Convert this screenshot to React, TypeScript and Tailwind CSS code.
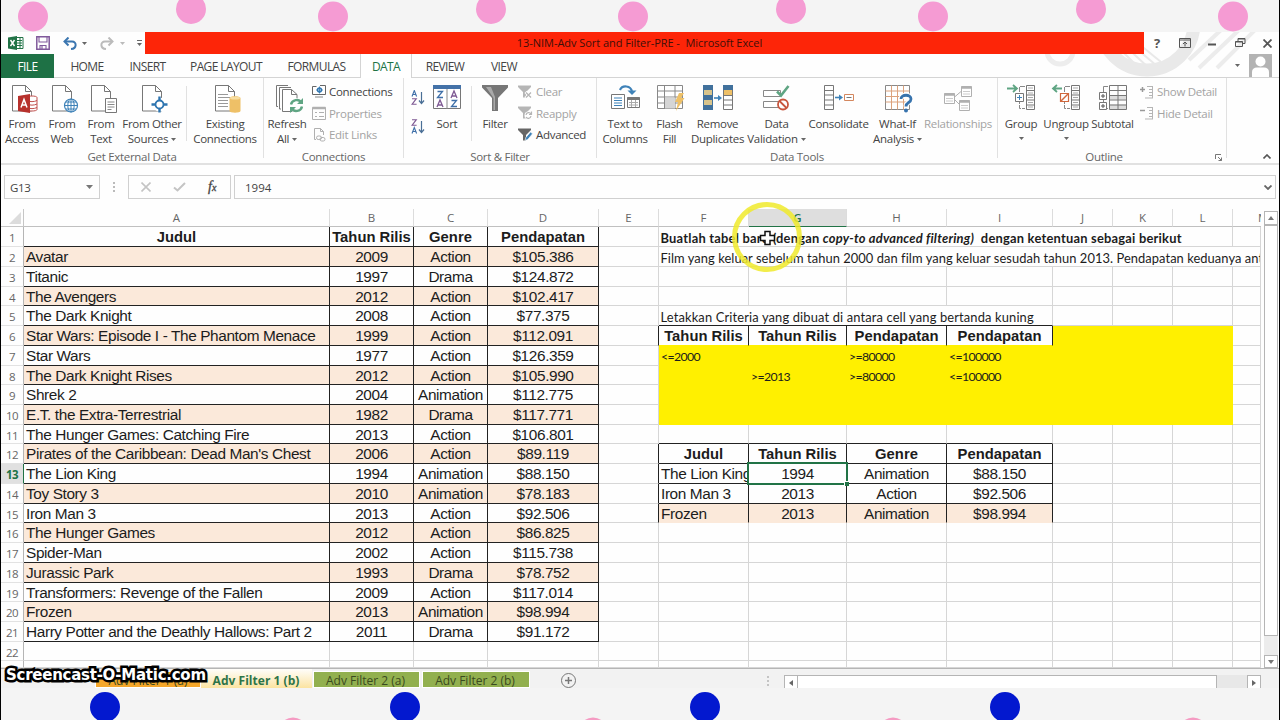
import React from "react";
import clsx from "clsx";

type CellStyle = "th" | "left" | "center" | "note" | "crit";

interface Cell {
  text?: React.ReactNode;
  kind?: CellStyle;
  fill?: string;
  right?: string;
  bottom?: string;
  span?: number;
  selected?: boolean;
}

const MOVIES = [
  ["Avatar", "2009", "Action", "$105.386"],
  ["Titanic", "1997", "Drama", "$124.872"],
  ["The Avengers", "2012", "Action", "$102.417"],
  ["The Dark Knight", "2008", "Action", "$77.375"],
  ["Star Wars: Episode I - The Phantom Menace", "1999", "Action", "$112.091"],
  ["Star Wars", "1977", "Action", "$126.359"],
  ["The Dark Knight Rises", "2012", "Action", "$105.990"],
  ["Shrek 2", "2004", "Animation", "$112.775"],
  ["E.T. the Extra-Terrestrial", "1982", "Drama", "$117.771"],
  ["The Hunger Games: Catching Fire", "2013", "Action", "$106.801"],
  ["Pirates of the Caribbean: Dead Man's Chest", "2006", "Action", "$89.119"],
  ["The Lion King", "1994", "Animation", "$88.150"],
  ["Toy Story 3", "2010", "Animation", "$78.183"],
  ["Iron Man 3", "2013", "Action", "$92.506"],
  ["The Hunger Games", "2012", "Action", "$86.825"],
  ["Spider-Man", "2002", "Action", "$115.738"],
  ["Jurassic Park", "1993", "Drama", "$78.752"],
  ["Transformers: Revenge of the Fallen", "2009", "Action", "$117.014"],
  ["Frozen", "2013", "Animation", "$98.994"],
  ["Harry Potter and the Deathly Hallows: Part 2", "2011", "Drama", "$91.172"],
];

const RESULTS: Record<number, string[]> = {
  12: ["Judul", "Tahun Rilis", "Genre", "Pendapatan"],
  13: ["The Lion King", "1994", "Animation", "$88.150"],
  14: ["Iron Man 3", "2013", "Action", "$92.506"],
  15: ["Frozen", "2013", "Animation", "$98.994"],
};

const CRITERIA: Record<number, string[]> = {
  6: ["Tahun Rilis", "Tahun Rilis", "Pendapatan", "Pendapatan"],
  7: ["<=2000", "", ">=80000", "<=100000"],
  8: ["", ">=2013", ">=80000", "<=100000"],
  9: ["", "", "", ""],
  10: ["", "", "", ""],
};

const COLUMNS = ["A", "B", "C", "D", "E", "F", "G", "H", "I", "J", "K", "L", "M"];
const GRID = "grid grid-cols-[23px_306px_84px_74px_111px_60px_90px_98px_100px_106px_60px_60px_60px_28px]";

const DARK = "border-r-[#222]";
const DARK_B = "border-b-[#222]";
const PEACH = "bg-[#fbe9da]";
const YELLOW = "bg-[#fff000]";

// rows are 19.73px tall on average, so lines are rounded one by one
const lineAt = (row: number) => Math.round(227.4 + 19.73 * row);
const rowHeight = (row: number) => (row > 22 ? 668 - lineAt(22) : lineAt(row) - lineAt(row - 1));

function cellsFor(row: number): Cell[] {
  const cells: Cell[] = [];
  if (row === 1) {
    ["Judul", "Tahun Rilis", "Genre", "Pendapatan"].forEach((text) =>
      cells.push({ text, kind: "th", right: DARK, bottom: DARK_B })
    );
  } else if (row <= 21) {
    MOVIES[row - 2].forEach((text, i) =>
      cells.push({
        text,
        kind: i === 0 ? "left" : "center",
        fill: row % 2 === 0 ? PEACH : undefined,
        right: DARK,
        bottom: DARK_B,
      })
    );
  } else {
    cells.push({}, {}, {}, {});
  }

  // column E carries the left edge of the tables beside it
  cells.push({ right: row === 6 || RESULTS[row] ? DARK : undefined });

  if (row === 1) {
    cells.push({
      kind: "note",
      span: 7,
      text: (
        <span className="font-bold text-[12.9px] tracking-[0.22px]">
          Buatlah tabel baru (dengan <i>copy-to advanced filtering)</i>&nbsp; dengan ketentuan sebagai berikut
        </span>
      ),
    });
    cells.push({});
  } else if (row === 2) {
    cells.push({
      kind: "note",
      span: 8,
      text: "Film yang keluar sebelum tahun 2000 dan film yang keluar sesudah tahun 2013. Pendapatan keduanya antara",
    });
  } else if (row === 5) {
    cells.push({
      kind: "note",
      span: 4,
      bottom: DARK_B,
      text: (
        <span className="tracking-[0.14px]">
          Letakkan Criteria yang dibuat di antara cell yang bertanda kuning
        </span>
      ),
    });
    cells.push({}, {}, {}, {});
  } else if (CRITERIA[row]) {
    CRITERIA[row].forEach((text) =>
      cells.push(
        row === 6
          ? { text, kind: "th", right: DARK, bottom: "border-b-[#fff000]" }
          : { text, kind: "crit", fill: YELLOW, right: "border-r-[#fff000]", bottom: "border-b-[#fff000]" }
      )
    );
    for (let i = 0; i < 3; i++) {
      cells.push({ fill: YELLOW, right: "border-r-[#fff000]", bottom: "border-b-[#fff000]" });
    }
    cells.push({});
  } else if (RESULTS[row]) {
    RESULTS[row].forEach((text, i) =>
      cells.push({
        text,
        kind: row === 12 ? "th" : i === 0 ? "left" : "center",
        fill: row === 15 ? PEACH : undefined,
        right: DARK,
        bottom: row === 15 ? "border-b-[#fbe9da]" : DARK_B,
        selected: row === 13 && i === 1,
      })
    );
    cells.push({}, {}, {}, {});
  } else {
    for (let i = 0; i < 8; i++) {
      cells.push({ bottom: row === 11 && i < 4 ? DARK_B : undefined });
    }
  }
  return cells;
}

const KINDS: Record<CellStyle, string> = {
  th: "justify-center pt-px font-bold text-[14.8px] font-['Liberation_Sans',sans-serif]",
  left: "pl-[2px] pt-px text-[15.4px] tracking-[-0.39px] font-['Liberation_Sans',sans-serif]",
  center: "justify-center pt-px text-[15.4px] tracking-[-0.39px] font-['Liberation_Sans',sans-serif]",
  note: "pl-[1.5px] pt-[4px] text-[12.9px] tracking-[0.06px] font-['Lato',sans-serif]",
  crit: "pl-[2px] pt-[4px] text-[12.3px] tracking-[-0.65px] font-['Lato',sans-serif]",
};

const SPANS: Record<number, string> = { 4: "col-span-4", 7: "col-span-7", 8: "col-span-8" };

function GridCell({ cell }: { cell: Cell }) {
  return (
    <div
      className={clsx(
        "min-w-0 flex items-center border-r border-b whitespace-nowrap text-[#1c1c1c] leading-none",
        cell.right ?? "border-r-[#d6d6d6]",
        cell.bottom ?? "border-b-[#d6d6d6]",
        cell.fill,
        cell.kind && KINDS[cell.kind],
        cell.span && SPANS[cell.span],
        cell.selected ? "relative" : "overflow-hidden"
      )}
    >
      {cell.text}
      {cell.selected && (
        <>
          <div className="absolute -inset-[2px] border-2 border-[#217346] z-10" />
          <div className="absolute -right-[3px] -bottom-[3px] size-[5px] bg-[#217346] border-l border-t border-white z-20" />
        </>
      )}
    </div>
  );
}

function Caret({ className = "text-[#666]" }: { className?: string }) {
  return (
    <svg width="5" height="3" viewBox="0 0 5 3" className={clsx("inline-block", className)}>
      <path d="M0 0h5L2.5 3z" fill="currentColor" />
    </svg>
  );
}

/* ---------- ribbon icons ---------- */

function Doc({ children }: { children?: React.ReactNode }) {
  return (
    <svg width="30" height="30" viewBox="0 0 30 30" fill="none" className="ml-[4px]">
      <path d="M3.5 1.5h13l6 6v19.500h-19z" fill="#fff" stroke="#777" />
      <path d="M16.500 1.500v6h6" stroke="#777" />
      {children}
    </svg>
  );
}

const AccessIcon = () => (
  <Doc>
    <path d="M18 13.500c0-2 10-2 10 0v12c0 2-10 2-10 0z" fill="#fff" stroke="#c0504d" />
    <path d="M18 16.500c3 1.500 7 1.500 10 0M18 20c3 1.500 7 1.500 10 0M18 23.500c3 1.500 7 1.500 10 0" stroke="#c0504d" />
    <path d="M9 12l12-2v19L9 27z" fill="#b7312c" />
    <path d="M12 23.500l3-8 3 8M13 21h4" stroke="#fff" strokeWidth="1.500" />
  </Doc>
);

const WebIcon = () => (
  <Doc>
    <circle cx="22" cy="21.500" r="6.500" fill="#fff" stroke="#3e82b8" strokeWidth="1.200" />
    <path d="M15.500 21.500h13M22 15v13M17 18h10M17 25h10" stroke="#3e82b8" />
    <ellipse cx="22" cy="21.500" rx="3.200" ry="6.500" stroke="#3e82b8" />
  </Doc>
);

const TextIcon = () => (
  <Doc>
    <path d="M17.500 14.500h11v14h-11z" fill="#fff" stroke="#777" />
    <path d="M19.500 18h7M19.500 20.500h7M19.500 23h7M19.500 25.500h4" stroke="#888" />
  </Doc>
);

const OtherIcon = () => (
  <Doc>
    <circle cx="20.500" cy="20.500" r="7" fill="#fff" />
    <circle cx="20.500" cy="20.500" r="4" fill="#fff" stroke="#2e75b0" strokeWidth="1.800" />
    <path d="M20.500 12.500v4M20.500 24.500v4M12.500 20.500h4M24.500 20.500h4" stroke="#2e75b0" strokeWidth="2.400" />
  </Doc>
);

const ExistingIcon = () => (
  <Doc>
    <path d="M6 10.500h10M6 13.500h13M6 16.500h10M6 19.500h10M6 22.500h10" stroke="#999" />
    <path d="M17.500 14c0-2.500 11-2.500 11 0v13c0 2.300-11 2.300-11 0z" fill="#eec067" />
    <ellipse cx="23" cy="14" rx="5" ry="1.500" fill="#f8deA0" />
  </Doc>
);

const RefreshIcon = () => (
  <svg width="30" height="30" viewBox="0 0 30 30" fill="none" className="ml-[3px]">
    <path d="M4 22.500H2.500V1.500H14M7 25H5.500V3.500H17" stroke="#777" />
    <path d="M8.500 5.500h9l5.500 5v17H8.500z" fill="#fff" stroke="#777" />
    <path d="M17.500 5.500v5H23" stroke="#777" />
    <circle cx="22.500" cy="21.500" r="7.500" fill="#fff" />
    <path d="M17 20.500c1-5 8-6 10-2M28 22.500c-1 5-8 6-10 2" stroke="#5fa583" strokeWidth="2.400" />
    <path d="M29 14v6h-6zM16 29v-6h6z" fill="#5fa583" />
  </svg>
);

const SortIcon = () => (
  <svg width="28" height="30" viewBox="0 0 28 30" fill="none">
    <path d="M.5 2.500h27v22H.5z" fill="#fff" stroke="#777" />
    <path d="M0 1h28v4H0z" fill="#4472a8" />
    <path d="M14 5v20" stroke="#888" />
    <path d="M4.500 7.500h5l-5 6h5.500" stroke="#3e6fa8" strokeWidth="1.300" />
    <path d="M4 23l3-7 3 7M5 21h4" stroke="#7f5a94" strokeWidth="1.300" />
    <path d="M18 14l3-7 3 7M19 12h4" stroke="#7f5a94" strokeWidth="1.300" />
    <path d="M18.500 16.500h5l-5 6H24" stroke="#3e6fa8" strokeWidth="1.300" />
  </svg>
);

function SmallSort({ desc = false }: { desc?: boolean }) {
  const a = <path d="M1 6.500l2.300-6 2.300 6M1.800 4.500h3" />;
  const z = <path d="M1 .7h4.300L1 6.300h4.600" />;
  return (
    <svg width="14" height="16" viewBox="0 0 14 16" fill="none" strokeWidth="1.100">
      <g stroke={desc ? "#7f5a94" : "#3e6fa8"}>{desc ? z : a}</g>
      <g stroke={desc ? "#3e6fa8" : "#7f5a94"} transform="translate(0 8)">
        {desc ? a : z}
      </g>
      <path d="M10.500 2v11M8 10.500l2.500 3 2.500-3" stroke="#4a6f96" strokeWidth="1.200" />
    </svg>
  );
}

const FilterIcon = () => (
  <svg width="28" height="30" viewBox="0 0 28 30">
    <path d="M1 1h26v2.500L17 14v13h-6V14L1 3.500z" fill="#777" />
    <path d="M5 3h5l4 10v13h-1.500V14z" fill="#aaa" />
  </svg>
);

const ColumnsIcon = () => (
  <svg width="30" height="30" viewBox="0 0 30 30" fill="none">
    <path d="M10 6c2-5 11-5 12 2" stroke="#3e82b8" strokeWidth="2.200" />
    <path d="M17.500 6.500h9L22 11z" fill="#3e82b8" />
    <path d="M1.500 10.500h13v14h-13z" fill="#fff" stroke="#777" />
    <path d="M4 14h8M4 16.500h8M4 19h8M4 21.500h8" stroke="#3e82b8" />
    <path d="M17.500 13.500h12v10h-12z" fill="#fff" stroke="#777" />
    <path d="M17.500 13h12v3h-12z" fill="#777" />
    <path d="M19 18.500h9M19 21h9M21.500 16v7M25.500 16v7" stroke="#aaa" />
  </svg>
);

const FlashIcon = () => (
  <svg width="30" height="30" viewBox="0 0 30 30" fill="none">
    <path d="M2.500 1.500h25v23h-25z" fill="#fff" stroke="#888" />
    <path d="M2.500 7h25M2.500 13h25M2.500 19h25M9.500 1.500v23M20 1.500v23" stroke="#888" />
    <path d="M10 13.500h10v11H10z" fill="#d5d5d5" />
    <path d="M24 9h5l-3 5h3.500L21 27l2-9h-3z" fill="#eec067" />
  </svg>
);

const DuplicatesIcon = () => (
  <svg width="32" height="30" viewBox="0 0 32 30" fill="none">
    <path d="M1 1h10v25H1z" fill="#41719c" />
    <path d="M2 6h8v5H2zM2 16h8v5H2z" fill="#d8c48c" />
    <path d="M12 14h6" stroke="#3e82b8" strokeWidth="1.600" />
    <path d="M16 11l4 3-4 3z" fill="#3e82b8" />
    <path d="M21.500 1.500h9v24h-9z" fill="#fff" stroke="#777" />
    <path d="M21 1h10v5H21z" fill="#41719c" />
    <path d="M22 6h8v5h-8z" fill="#eec067" />
    <path d="M21.500 11.500h9M21.500 16h9M21.500 21h9" stroke="#777" />
  </svg>
);

const ValidationIcon = () => (
  <svg width="30" height="30" viewBox="0 0 30 30" fill="none">
    <path d="M1.500 6.500h17v6h-17zM1.500 17.500h17v6h-17z" fill="#fff" stroke="#888" />
    <path d="M15 7.500l4 4L26.500 2" stroke="#5fa583" strokeWidth="2.600" />
    <circle cx="21" cy="20.500" r="5" fill="#fff" stroke="#c8553d" strokeWidth="1.800" />
    <path d="M17.500 17l7 7" stroke="#c8553d" strokeWidth="1.800" />
  </svg>
);

const ConsolidateIcon = () => (
  <svg width="32" height="30" viewBox="0 0 32 30" fill="none">
    <path d="M1.500 1.500h9v24h-9zM1.500 6.500h9M1.500 11h9M1.500 16h9M1.500 21h9" stroke="#777" />
    <path d="M12 13.500h6" stroke="#3e82b8" strokeWidth="1.600" />
    <path d="M16 10.500l4 3-4 3z" fill="#3e82b8" />
    <path d="M21.500 10.500h9v6h-9z" fill="#fff" stroke="#d4875e" />
    <path d="M23.500 13.500h5" stroke="#777" />
  </svg>
);

const WhatIfIcon = () => (
  <svg width="30" height="30" viewBox="0 0 30 30" fill="none">
    <path d="M2.500 1.500h24v24h-24z" fill="#fff" stroke="#888" />
    <path d="M2.500 7h24M2.500 12.500h24M2.500 18h24M8.500 1.500v24M14.500 1.500v24M20.500 1.500v24" stroke="#dca27c" />
    <path d="M18 15c0-5 10-5 10 0 0 4-5 3-5 7.500" stroke="#fff" strokeWidth="5" />
    <path d="M18 15c0-5 10-5 10 0 0 4-5 3-5 7.500" stroke="#3773ad" strokeWidth="2.800" />
    <circle cx="23" cy="26.500" r="2" fill="#3773ad" />
  </svg>
);

const RelationIcon = () => (
  <svg width="30" height="30" viewBox="0 0 30 30" fill="none" stroke="#b0b0b0">
    <path d="M11 13.500l7-6M11 15l6 6" />
    <path d="M18.500 2.500h10v10h-10zM1.500 9.500h10v10h-10zM16.500 16.500h10v10h-10z" fill="#fff" />
    <path d="M18.500 3.500h10M1.500 10.500h10M16.500 17.500h10" strokeWidth="2.500" />
    <path d="M20 7.500h7M20 10h7M3 14.500h7M3 17h7M18 21.500h7M18 24h7" stroke="#ccc" />
  </svg>
);

function OutlineIcon({ ungroup = false }: { ungroup?: boolean }) {
  return (
    <svg width="30" height="30" viewBox="0 0 30 30" fill="none">
      {ungroup ? (
        <path d="M11 4.500H3M6 1L2 4.500 6 8" stroke="#5fa583" strokeWidth="1.800" />
      ) : (
        <path d="M1 4.500h9M7 1l4 3.500L7 8" stroke="#5fa583" strokeWidth="1.800" />
      )}
      <path d="M19 2.500h-5.500v22H19" stroke="#888" strokeDasharray="5 1" />
      <path d="M20.500 1.500h8v24h-8zM20.500 6.500h8M20.500 11h8M20.500 16h8M20.500 21h8" stroke="#777" />
      <path d="M22 4h5M22 9h5M22 13.500h5M22 18.500h5M22 23h5" stroke="#aaa" />
      {ungroup ? (
        <>
          <path d="M9.500 9.500h8v8h-8z" fill="#fff" stroke="#d0673c" strokeWidth="1.200" />
          <path d="M10 17l7-7" stroke="#d0673c" strokeWidth="1.400" />
        </>
      ) : (
        <>
          <path d="M9.500 9.500h8v8h-8z" fill="#fff" stroke="#777" />
          <path d="M11 13.500h5M13.500 11v5" stroke="#3e82b8" />
        </>
      )}
    </svg>
  );
}

const SubtotalIcon = () => (
  <svg width="30" height="30" viewBox="0 0 30 30" fill="none">
    <path d="M10 2.500H5.500v22H10" stroke="#888" />
    <path d="M12 11.500h16v4H12zM12 20.500h16v5H12z" fill="#ddd" />
    <path d="M11.500 1.500h17v24h-17zM11.500 6.500h17M11.500 11.500h17M11.500 16h17M11.500 21h17M20 1.500v24" stroke="#777" />
    <path d="M1.500 8.500h7v7h-7zM1.500 18.500h7v7h-7z" fill="#fff" stroke="#777" />
    <path d="M3 12h4M5 10v4M3 22h4M5 20v4" stroke="#555" />
  </svg>
);

const ConnectionsIcon = () => (
  <svg width="14" height="13" viewBox="0 0 14 13" fill="none">
    <path d="M.5 1.500h4M8 .5h5.500v9H.5v-8" stroke="#666" />
    <circle cx="7.500" cy="5" r="2" stroke="#2e75b0" strokeWidth="1.300" />
    <path d="M7.500 1.500v7M4 5h7" stroke="#2e75b0" strokeWidth=".8" />
    <path d="M3 12h8" stroke="#888" />
  </svg>
);

const PropertiesIcon = () => (
  <svg width="14" height="14" viewBox="0 0 14 14" fill="none" stroke="#b0b0b0">
    <path d="M.5 1.500h13v12H.5z" />
    <path d="M.5 2h13" strokeWidth="2.500" />
    <path d="M3 6.500h2M3 10.500h2M7 6.500h5M7 10.500h5" />
  </svg>
);

const LinksIcon = () => (
  <svg width="14" height="14" viewBox="0 0 14 14" fill="none" stroke="#b0b0b0">
    <path d="M4 11.500H2.500V.500h6l3 3V7M8.500.500v3h3" />
    <rect x="4.500" y="8" width="5" height="3.500" rx="1.700" />
    <rect x="8" y="9.500" width="5" height="3.500" rx="1.700" />
  </svg>
);

function SmallFilter({ kind }: { kind: "clear" | "reapply" | "advanced" }) {
  return (
    <svg width="15" height="14" viewBox="0 0 15 14" fill="none">
      <path d="M0 .500h13v1.500L8 7v5.500H5V7L0 2z" fill={kind === "advanced" ? "#666" : "#b5b5b5"} />
      {kind === "clear" && <path d="M7.500 7l6 6M13.500 7l-6 6" stroke="#fff" strokeWidth="3" />}
      {kind === "clear" && <path d="M8 7.500l5 5M13 7.500l-5 5" stroke="#b5b5b5" strokeWidth="1.300" />}
      {kind === "reapply" && (
        <>
          <circle cx="10.500" cy="9.500" r="4" fill="#fff" />
          <path d="M8 9c.5-3 4-3 5-1M13 10c-.5 3-4 3-5 1M13.500 5.500V8.500H11" stroke="#b5b5b5" strokeWidth="1.200" />
        </>
      )}
      {kind === "advanced" && <path d="M7 12.500l.8-3L12.500 4l2 1.800-4.700 5.700z" fill="#3e82b8" stroke="#fff" strokeWidth=".6" />}
    </svg>
  );
}

function DetailIcon({ plus = false }: { plus?: boolean }) {
  return (
    <svg width="14" height="14" viewBox="0 0 14 14" fill="none" stroke="#b5b5b5">
      <path d="M0 4.500h5" strokeWidth="1.500" stroke="#999" />
      {plus && <path d="M2.500 2v5" strokeWidth="1.500" stroke="#999" />}
      <path d="M7 1.500h6M9 4.500h4M9 7.500h4M9 10.500h4M5 13h8M12.500 1v12" />
    </svg>
  );
}

/* ---------- ribbon pieces ---------- */

interface BigButtonProps {
  icon: React.ReactNode;
  lines: string[];
  caret?: boolean;
  caretBelow?: boolean;
  disabled?: boolean;
  className: string;
}

function BigButton({ icon, lines, caret, caretBelow, disabled, className }: BigButtonProps) {
  return (
    <button className={clsx("flex flex-col items-center shrink-0 pt-[6px]", className, disabled ? "text-[#a3a3a3]" : "text-[#444]")}>
      <span className="h-[32px] flex items-start">{icon}</span>
      {lines.map((line, i) => (
        <span key={line} className="leading-[15px] whitespace-nowrap">
          {line}
          {caret && i === lines.length - 1 && (
            <span className="inline-flex pl-[3px] align-middle">
              <Caret />
            </span>
          )}
        </span>
      ))}
      {caretBelow && (
        <span className="h-[15px] flex items-center">
          <Caret />
        </span>
      )}
    </button>
  );
}

function SmallButton({ icon, label, disabled }: { icon: React.ReactNode; label: string; disabled?: boolean }) {
  return (
    <button className={clsx("flex items-center gap-[3px] h-[21.5px] whitespace-nowrap", disabled ? "text-[#a3a3a3]" : "text-[#444]")}>
      {icon}
      <span>{label}</span>
    </button>
  );
}

function RibbonGroup({ label, className, children }: { label: string; className: string; children: React.ReactNode }) {
  return (
    <section className={clsx("flex flex-col shrink-0 border-r border-[#e1e1e1] mb-[5px]", className)}>
      <div className="flex h-[69px] shrink-0">{children}</div>
      <div className="text-center text-[#666] leading-[16px] pt-[2px]">{label}</div>
    </section>
  );
}

function TitleBar() {
  return (
    <header className="relative flex h-[22px] shrink-0 items-center">
      <div className="w-[144px] h-full flex items-center pl-[7px] shrink-0">
        <svg width="16" height="14" viewBox="0 0 16 14" fill="none">
          <path d="M8 1.500h7v11H8z" fill="#fff" stroke="#217346" />
          <path d="M9 4.500h5M9 7h5M9 9.500h5M12 2v10" stroke="#217346" />
          <path d="M0 1.500L9 0v14l-9-1.500z" fill="#217346" />
          <path d="M2.500 4l4 6M6.500 4l-4 6" stroke="#fff" strokeWidth="1.400" />
        </svg>
        <svg width="14" height="14" viewBox="0 0 14 14" fill="none" className="ml-[12px]">
          <path d="M.8.800h12.400v12.400H.8z" stroke="#80599b" strokeWidth="1.500" />
          <path d="M3 1v5h8V1M4 13V9.500h6V13M6 10v3" stroke="#80599b" strokeWidth="1.100" />
        </svg>
        <svg width="14" height="13" viewBox="0 0 14 13" fill="none" className="ml-[13px]">
          <path d="M2 4.500h7c5 0 5 7-1 7.500" stroke="#3b76b0" strokeWidth="2" />
          <path d="M5.500.500L1.500 4.500l4 4" stroke="#3b76b0" strokeWidth="2" />
        </svg>
        <span className="ml-[5px] flex"><Caret /></span>
        <svg width="14" height="13" viewBox="0 0 14 13" fill="none" className="ml-[13px]">
          <path d="M12 4.500H5c-5 0-5 7 1 7.500" stroke="#bbb" strokeWidth="2" />
          <path d="M8.500.500l4 4-4 4" stroke="#bbb" strokeWidth="2" />
        </svg>
        <span className="ml-[6px] flex"><Caret className="text-[#bbb]" /></span>
        <span className="ml-[12px] flex flex-col gap-[2px]">
          <span className="h-px w-[5px] bg-[#666]" />
          <Caret />
        </span>
      </div>
      <div className="w-[999px] h-full bg-[#fd2508] shrink-0 flex items-center justify-center text-[11px] tracking-[-0.05px] text-[#3d0f08] whitespace-pre pr-[10px]">
        13-NIM-Adv Sort and Filter-PRE -  Microsoft Excel
      </div>
      {/* faint circles drawn behind the window buttons */}
      <svg width="240" height="45" viewBox="0 0 240 45" fill="none" className="absolute right-0 top-0 -z-10">
        <circle cx="108" cy="-9" r="47" stroke="#e9e9e9" strokeWidth="13" />
        <circle cx="21" cy="19" r="13" stroke="#ededed" strokeWidth="5" />
        <path d="M76 12l28 28M84 12l28 26M92 12l26 22M100 12l22 18" stroke="#e9e9e9" strokeWidth="2" />
        <path d="M150 28l32-30M160 36l40-38M178 36l38-38" stroke="#ececec" strokeWidth="4" />
      </svg>
      <div className="flex-1 h-full flex items-center pl-[10px] text-[#555]">
        <span className="font-bold text-[13px] leading-none w-[8px]">?</span>
        <svg width="12" height="10" viewBox="0 0 12 10" fill="none" stroke="currentColor" className="ml-[17px]">
          <path d="M.5.500h11v9H.5zM.5 2h11M6 8.500V4M4 6l2-2 2 2" />
        </svg>
        <svg width="9" height="10" viewBox="0 0 9 10" className="ml-[17px]">
          <path d="M0 5.500h8v2H0z" fill="currentColor" />
        </svg>
        <svg width="11" height="10" viewBox="0 0 11 10" fill="none" stroke="currentColor" className="ml-[18px]">
          <path d="M.5 3.500h7v5h-7zM3 3V.500h7v5H8M.5 4h7M3 1h7" />
        </svg>
        <svg width="9" height="9" viewBox="0 0 9 9" stroke="currentColor" strokeWidth="1.800" className="ml-[17px]">
          <path d="M.5.500l8 8M8.500.500l-8 8" />
        </svg>
      </div>
    </header>
  );
}

const TABS = [
  { name: "FILE", cls: "w-[53px] bg-[#1e7145] text-white" },
  { name: "HOME", cls: "w-[66px] border-b border-[#d4d4d4]" },
  { name: "INSERT", cls: "w-[55px] border-b border-[#d4d4d4]" },
  { name: "PAGE LAYOUT", cls: "w-[102px] border-b border-[#d4d4d4]" },
  { name: "FORMULAS", cls: "w-[83px] pr-1 border-b border-[#d4d4d4]" },
  { name: "DATA", cls: "w-[52px] border-x border-[#d4d4d4] text-[#217346] bg-white" },
  { name: "REVIEW", cls: "w-[66px] border-b border-[#d4d4d4]" },
  { name: "VIEW", cls: "w-[52px] border-b border-[#d4d4d4]" },
];

function TabRow() {
  return (
    <nav className="flex h-[24px] shrink-0 text-[12px] tracking-[-0.6px] text-[#444]">
      {TABS.map((tab) => (
        <div key={tab.name} className={clsx("flex items-center justify-center shrink-0 whitespace-nowrap pt-[2px]", tab.cls)}>
          {tab.name}
        </div>
      ))}
      <div className="flex-1 border-b border-[#d4d4d4] flex items-center justify-end pr-[7px] gap-[9px]">
        <Caret />
        <svg width="23" height="23" viewBox="0 0 23 23">
          <path d="M0 0h23v23H0z" fill="#b3b3b3" />
          <circle cx="11.500" cy="7.500" r="5" fill="#fff" />
          <path d="M3 23v-5c0-3 2-4.500 5-4.500h7c3 0 5 1.500 5 4.500v5z" fill="#fff" />
        </svg>
      </div>
    </nav>
  );
}

function Ribbon() {
  return (
    <div className="flex h-[87px] shrink-0 border-b-2 border-[#e1e1e1] text-[11.5px] tracking-[-0.3px]">
      <RibbonGroup label="Get External Data" className="w-[263px]">
        <BigButton icon={<AccessIcon />} lines={["From", "Access"]} className="w-[42px]" />
        <BigButton icon={<WebIcon />} lines={["From", "Web"]} className="w-[38px]" />
        <BigButton icon={<TextIcon />} lines={["From", "Text"]} className="w-[40px]" />
        <BigButton icon={<OtherIcon />} lines={["From Other", "Sources"]} caret className="w-[62px]" />
        <div className="w-px bg-[#e1e1e1] mx-[3px] mt-[8px] mb-[6px]" />
        <BigButton icon={<ExistingIcon />} lines={["Existing", "Connections"]} className="w-[70px]" />
      </RibbonGroup>
      <RibbonGroup label="Connections" className="w-[140px]">
        <BigButton icon={<RefreshIcon />} lines={["Refresh", "All"]} caret className="w-[46px]" />
        <div className="flex flex-col items-start pt-[3px] pl-[2px]">
          <SmallButton icon={<ConnectionsIcon />} label="Connections" />
          <SmallButton icon={<PropertiesIcon />} label="Properties" disabled />
          <SmallButton icon={<LinksIcon />} label="Edit Links" disabled />
        </div>
      </RibbonGroup>
      <RibbonGroup label="Sort & Filter" className="w-[193px]">
        <div className="flex flex-col gap-[13px] pl-[7px] pt-[12px] w-[24px]">
          <SmallSort />
          <SmallSort desc />
        </div>
        <BigButton icon={<SortIcon />} lines={["Sort"]} className="w-[38px]" />
        <div className="w-px bg-[#e1e1e1] ml-[5px] mt-[8px] mb-[6px]" />
        <BigButton icon={<FilterIcon />} lines={["Filter"]} className="w-[46px]" />
        <div className="flex flex-col items-start pt-[3px]">
          <SmallButton icon={<SmallFilter kind="clear" />} label="Clear" disabled />
          <SmallButton icon={<SmallFilter kind="reapply" />} label="Reapply" disabled />
          <SmallButton icon={<SmallFilter kind="advanced" />} label="Advanced" />
        </div>
      </RibbonGroup>
      <RibbonGroup label="Data Tools" className="w-[401px]">
        <BigButton icon={<ColumnsIcon />} lines={["Text to", "Columns"]} className="w-[56px]" />
        <BigButton icon={<FlashIcon />} lines={["Flash", "Fill"]} className="w-[33px]" />
        <BigButton icon={<DuplicatesIcon />} lines={["Remove", "Duplicates"]} className="w-[63px]" />
        <BigButton icon={<ValidationIcon />} lines={["Data", "Validation"]} caret className="w-[55px]" />
        <BigButton icon={<ConsolidateIcon />} lines={["Consolidate"]} className="w-[69px]" />
        <BigButton icon={<WhatIfIcon />} lines={["What-If", "Analysis"]} caret className="w-[49px]" />
        <BigButton icon={<RelationIcon />} lines={["Relationships"]} disabled className="w-[72px]" />
      </RibbonGroup>
      <RibbonGroup label="Outline" className="relative w-[229px] pr-[16px]">
        <BigButton icon={<OutlineIcon />} lines={["Group"]} caretBelow className="w-[46px]" />
        <BigButton icon={<OutlineIcon ungroup />} lines={["Ungroup"]} caretBelow className="w-[44px]" />
        <BigButton icon={<SubtotalIcon />} lines={["Subtotal"]} className="w-[49px]" />
        <div className="flex flex-col items-start pt-[3px] pl-[3px]">
          <SmallButton icon={<DetailIcon plus />} label="Show Detail" disabled />
          <SmallButton icon={<DetailIcon />} label="Hide Detail" disabled />
        </div>
        <svg width="7" height="7" viewBox="0 0 7 7" fill="none" stroke="#777" className="absolute right-[4px] -bottom-[3px]">
          <path d="M.5 5V.500H6M3 3l3.500 3.500M6.500 3.500v3h-3" />
        </svg>
      </RibbonGroup>
      <div className="flex-1 flex items-end justify-end pr-[8px] pb-[4px]">
        <svg width="8" height="5" viewBox="0 0 8 5" fill="none" stroke="#555" strokeWidth="1.600">
          <path d="M.5 4.500L4 1l3.500 3.500" />
        </svg>
      </div>
    </div>
  );
}

function FormulaBar() {
  return (
    <div className="flex h-[24px] mt-[10px] shrink-0 pl-[3px] pr-[3px] text-[11.500px] text-[#444]">
      <div className="w-[96px] border border-[#d0d0d0] flex items-center justify-between pl-[5px] pr-[6px]">
        <span className="tracking-[-0.3px] pt-px">G13</span>
        <svg width="7" height="4" viewBox="0 0 7 4"><path d="M0 0h7L3.500 4z" fill="#777" /></svg>
      </div>
      <div className="w-[28px] flex flex-col items-center justify-center gap-[2px]">
        <span className="size-[2px] bg-[#bbb]" />
        <span className="size-[2px] bg-[#bbb]" />
        <span className="size-[2px] bg-[#bbb]" />
      </div>
      <div className="w-[103px] border border-[#d0d0d0] flex items-center pl-[12px]">
        <svg width="10" height="10" viewBox="0 0 10 10" stroke="#c4c4c4" strokeWidth="1.600"><path d="M.5.500l9 9M9.500.500l-9 9" /></svg>
        <svg width="13" height="10" viewBox="0 0 13 10" fill="none" stroke="#c4c4c4" strokeWidth="2" className="ml-[22px]"><path d="M1 5.500l3.500 3L12 1" /></svg>
        <span className="ml-[22px] italic text-[14px] leading-none text-[#444] [-webkit-text-stroke:0.3px_#444] font-['Liberation_Serif',serif]">
          f<span className="text-[10px]">x</span>
        </span>
      </div>
      <div className="flex-1 ml-[3px] border border-[#d0d0d0] flex items-center justify-between pl-[10px] pr-[3px]">
        <span className="pt-px">1994</span>
        <svg width="8" height="5" viewBox="0 0 8 5" fill="none" stroke="#666" strokeWidth="1.800"><path d="M.5.500L4 4 7.500.500" /></svg>
      </div>
    </div>
  );
}

function Sheet() {
  const rows = Array.from({ length: 23 }, (_, i) => i + 1);
  return (
    <div className="w-[1260px] shrink-0">
      <div className={clsx(GRID, "h-[18px] text-[11.500px] text-[#666]")}>
        <div className="border-r border-b border-[#c6c6c6] flex items-end justify-end p-[2px]">
          <svg width="12" height="12" viewBox="0 0 12 12"><path d="M12 0v12H0z" fill="#dcdcdc" /></svg>
        </div>
        {COLUMNS.map((name) => (
          <div
            key={name}
            className={clsx(
              "flex items-center overflow-hidden border-b",
              name === "M" ? "pl-[25px]" : "justify-center border-r border-r-[#dcdcdc]",
              name === "G" ? "bg-[#dedede] font-semibold text-[#217346] border-b-[#217346]" : "border-b-[#c0c0c0]"
            )}
          >
            {name}
          </div>
        ))}
      </div>
      {rows.map((row) => (
        <div key={row} className={GRID} style={{ height: rowHeight(row) }}>
          <div
            className={clsx(
              "border-r border-b border-b-[#e2e2e2] flex items-center justify-center text-[11.500px] tracking-[-0.5px] leading-none pt-[3px]",
              row === 13 ? "bg-[#e0e0e0] font-bold text-[#217346] border-r-[#217346]" : "text-[#666] border-r-[#b5b5b5]"
            )}
          >
            {row <= 22 && row}
          </div>
          {cellsFor(row).map((cell, i) => (
            <GridCell key={i} cell={cell} />
          ))}
        </div>
      ))}
    </div>
  );
}

function VerticalScroll() {
  return (
    <div className="w-[14px] ml-[3px] mt-[2px] flex flex-col">
      <div className="h-[14px] border border-[#b5b5b5] flex items-center justify-center bg-white">
        <svg width="6" height="4" viewBox="0 0 6 4"><path d="M0 4h6L3 0z" fill="#777" /></svg>
      </div>
      <div className="h-[411px] border border-[#b5b5b5] bg-white" />
      <div className="flex-1 bg-[#ececec]" />
      <div className="h-[13px] border border-[#b5b5b5] flex items-center justify-center bg-white">
        <svg width="6" height="4" viewBox="0 0 6 4"><path d="M0 0h6L3 4z" fill="#777" /></svg>
      </div>
    </div>
  );
}

function SheetTabs() {
  return (
    <div className="flex h-[20px] shrink-0 bg-[#f2f2f2] border-t border-[#b5b5b5] overflow-hidden text-[12px] leading-none text-[#3a4a20]">
      <div className="w-[94px] shrink-0" />
      <div className="w-[106px] mt-[2px] pt-[3px] shrink-0 bg-[#f4a62a] border border-white text-center">Adv Filter 1 (a)</div>
      <div className="w-[111px] shrink-0 -mt-px pt-[7px] pr-px bg-gradient-to-b from-white to-[#fbe3a0] text-center font-bold tracking-[0.03px] text-[#2e7448]">
        Adv Filter 1 (b)
      </div>
      <div className="w-[107px] mt-[2px] pt-[3px] pr-[2px] shrink-0 bg-[#92b04f] border border-white text-center ml-px">Adv Filter 2 (a)</div>
      <div className="w-[108px] mt-[2px] pt-[3px] pr-[2px] shrink-0 bg-[#92b04f] border border-white text-center ml-[2px]">Adv Filter 2 (b)</div>
      <svg width="15" height="15" viewBox="0 0 15 15" fill="none" stroke="#777" className="ml-[31px] mt-[4px] shrink-0">
        <circle cx="7.500" cy="7.500" r="7" />
        <path d="M7.500 4v7M4 7.500h7" strokeWidth="1.500" />
      </svg>
      <div className="flex-1 flex flex-col items-end gap-[2px] pt-[7px] pr-[15px]">
        <span className="size-[2px] bg-[#c4c4c4]" />
        <span className="size-[2px] bg-[#c4c4c4]" />
        <span className="size-[2px] bg-[#c4c4c4]" />
      </div>
      <div className="flex w-[477px] h-[14px] mt-[6px] mr-[18px] shrink-0 bg-[#e8e8e8]">
        <div className="w-[14px] border border-b-0 border-[#b5b5b5] bg-white flex items-center justify-center">
          <svg width="4" height="6" viewBox="0 0 4 6"><path d="M4 0v6L0 3z" fill="#666" /></svg>
        </div>
        <div className="w-[419px] border border-l-0 border-b-0 border-[#b5b5b5] bg-white" />
        <div className="flex-1" />
        <div className="w-[14px] border border-b-0 border-[#b5b5b5] bg-white flex items-center justify-center">
          <svg width="4" height="6" viewBox="0 0 4 6"><path d="M0 0v6l4-3z" fill="#666" /></svg>
        </div>
      </div>
    </div>
  );
}

export default function App() {
  return (
    <div className="relative w-[1280px] h-[720px] overflow-hidden bg-[#f4f4f4] border-x border-black flex flex-col font-['Open_Sans',sans-serif]">
      <svg width="1278" height="32" viewBox="1 0 1278 32" fill="#f59bd3" className="shrink-0">
        {[33, 333, 633, 933, 1233].map((x) => (
          <circle key={x} cx={x} cy="16.500" r="15" />
        ))}
        {[191, 491, 791, 1091].map((x) => (
          <circle key={x} cx={x} cy="9" r="15" />
        ))}
      </svg>

      <main className="relative z-0 flex flex-col h-[656px] shrink-0 bg-[#fefefe]">
        <TitleBar />
        <TabRow />
        <Ribbon />
        <FormulaBar />
        <div className="flex h-[459px] mt-[10px] shrink-0">
          <Sheet />
          <VerticalScroll />
        </div>
        <SheetTabs />
      </main>

      <svg width="1278" height="32" viewBox="1 688 1278 32" className="shrink-0">
        {[105, 405, 705, 1005].map((x) => (
          <circle key={x} cx={x} cy="707" r="15" fill="#0318cf" />
        ))}
        {[293, 593, 893, 1193].map((x) => (
          <circle key={x} cx={x} cy="732" r="14.500" fill="#f59bc3" />
        ))}
      </svg>

      {/* highlighted mouse pointer */}
      <svg width="76" height="76" viewBox="0 0 76 76" fill="none" className="absolute left-[728px] top-[199px] z-30">
        <circle cx="38" cy="38" r="32.500" stroke="#f0ea2c" strokeOpacity="0.850" strokeWidth="5" />
        <path
          d="M36 32.500h5v4h4.500v5H41v4h-5v-4h-4.500v-5H36z"
          fill="#fff"
          stroke="#111"
          strokeWidth="1.500"
        />
      </svg>

      {/* recorder watermark */}
      <div className="absolute left-[5px] top-[666px] z-30 font-bold text-[15px] leading-[18px] tracking-[-0.26px] text-white whitespace-nowrap font-['DejaVu_Sans',sans-serif] [-webkit-text-stroke:5px_black] [paint-order:stroke_fill] [stroke-linejoin:round]">
        Screencast-O-Matic.com
      </div>
    </div>
  );
}
